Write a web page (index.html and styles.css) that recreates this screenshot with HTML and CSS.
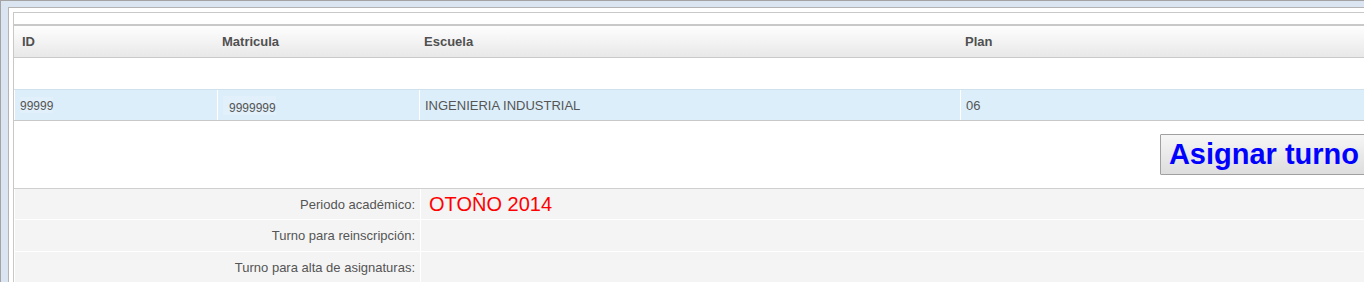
FILE: index.html
```html
<!DOCTYPE html>
<html lang="es">
<head>
    <meta charset="UTF-8">
    <meta name="viewport" content="width=device-width, initial-scale=1.0">
    <title>Asignar turno</title>
    <link rel="stylesheet" href="styles.css">
</head>
<body>
    <div class="frame">
        <div class="panel">
            <div class="grid-box">
                <div class="grid-toolbar"></div>
                <div class="grid-head">
                    <div class="head-cell first">ID</div>
                    <div class="head-cell">Matricula</div>
                    <div class="head-cell">Escuela</div>
                    <div class="head-cell">Plan</div>
                </div>
                <div class="grid-empty"></div>
                <div class="grid-row">
                    <div class="row-cell"><span class="cell-value">99999</span></div>
                    <div class="row-cell"><span class="cell-value low">9999999</span></div>
                    <div class="row-cell">INGENIERIA INDUSTRIAL</div>
                    <div class="row-cell">06</div>
                </div>
                <div class="action-bar">
                    <button type="button" class="assign-button">Asignar turno</button>
                </div>
                <div class="info-table">
                    <div class="info-label">Periodo académico:</div>
                    <div class="info-value period">OTOÑO 2014</div>
                    <div class="info-label">Turno para reinscripción:</div>
                    <div class="info-value"></div>
                    <div class="info-label">Turno para alta de asignaturas:</div>
                    <div class="info-value"></div>
                </div>
            </div>
        </div>
    </div>
</body>
</html>
```

FILE: styles.css
```css
html, body {
    margin: 0;
    padding: 0;
    overflow: hidden;
}

body {
    font-family: "Liberation Sans", Arial, sans-serif;
    font-size: 13px;
    color: #555;
    background-color: #dae5f1;
}

.frame {
    width: 1400px;
    border-top: 1px solid #a3a3a3;
    border-left: 1px solid #a3a3a3;
    padding: 6px 0 0 7px;
}

.panel {
    border: 1px solid #b4b4b4;
    background-color: #fff;
    padding: 4px;
}

.grid-box {
    width: 1368px;
    border: 1px solid #c8c8c8;
    background-color: #fff;
}

.grid-toolbar {
    height: 11px;
}

.grid-head,
.grid-row {
    display: grid;
    grid-template-columns: 203px 202px 541px 1fr;
}

.grid-head {
    height: 31px;
    border-top: 2px solid #c9c9c9;
    border-bottom: 1px solid #c9c9c9;
    background: linear-gradient(#fefefe, #e8e8e8);
}

.head-cell {
    display: flex;
    align-items: center;
    padding-left: 5px;
    font-size: 13px;
    font-weight: bold;
    color: #505050;
}

.head-cell.first {
    padding-left: 8px;
}

.grid-empty {
    height: 31px;
}

.grid-row {
    height: 30px;
    column-gap: 1px;
    padding-left: 1px;
    border-top: 1px solid #d0e1ee;
    border-bottom: 1px solid #c8c8c8;
    grid-template-columns: 202px 201px 540px 1fr;
}

.row-cell {
    display: flex;
    align-items: center;
    padding-left: 5px;
    background-color: #dceefa;
}

.cell-value {
    padding-top: 2px;
    font-size: 12px;
    background-color: #e1f0fb;
}

.cell-value.low {
    padding: 5px 0 0 6px;
}

.action-bar {
    display: flex;
    justify-content: flex-end;
    padding: 13px 14px 13px 0;
}

.assign-button {
    height: 41px;
    padding: 0 8px;
    border: 1px solid #a0a0a0;
    border-radius: 1px;
    background: linear-gradient(#f6f6f6, #dddddd);
    font-family: "Liberation Sans", Arial, sans-serif;
    font-size: 29px;
    font-weight: bold;
    color: #0000ff;
    cursor: pointer;
}

.info-table {
    display: grid;
    grid-template-columns: 405px 1fr;
    grid-auto-rows: 30px 31px 31px;
    gap: 1px;
    padding-left: 1px;
    border-top: 1px solid #cfcfcf;
}

.info-label,
.info-value {
    display: flex;
    align-items: center;
    background-color: #f4f4f4;
}

.info-label {
    justify-content: flex-end;
    padding-right: 5px;
}

.info-value {
    padding-left: 8px;
}

.period {
    font-size: 20px;
    color: #ff0000;
}
```
